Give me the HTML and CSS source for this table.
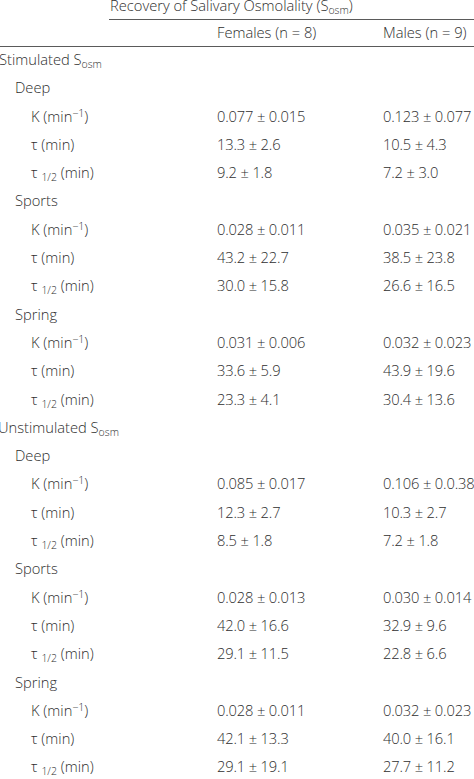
FILE: index.html
```html
<!DOCTYPE html>
<html>
<head>
<meta charset="utf-8">
<link rel="stylesheet" href="styles.css">
</head>
<body>
<div class="table">
  <div class="head-top"><span class="span-title">Recovery of Salivary Osmolality (S<sub>osm</sub>)</span></div>
  <div class="head-cols">
    <span></span><span>Females (n = 8)</span><span>Males (n = 9)</span>
  </div>
  <div class="body">
    <div class="row"><span class="l0">Stimulated S<sub>osm</sub></span><span></span><span></span></div>
    <div class="row"><span class="l1">Deep</span><span></span><span></span></div>
    <div class="row"><span class="l2">K (min<sup>−1</sup>)</span><span class="v">0.077 ± 0.015</span><span class="v">0.123 ± 0.077</span></div>
    <div class="row"><span class="l2">τ (min)</span><span class="v">13.3 ± 2.6</span><span class="v">10.5 ± 4.3</span></div>
    <div class="row"><span class="l2">τ <sub>1/2</sub> (min)</span><span class="v">9.2 ± 1.8</span><span class="v">7.2 ± 3.0</span></div>
    <div class="row"><span class="l1">Sports</span><span></span><span></span></div>
    <div class="row"><span class="l2">K (min<sup>−1</sup>)</span><span class="v">0.028 ± 0.011</span><span class="v">0.035 ± 0.021</span></div>
    <div class="row"><span class="l2">τ (min)</span><span class="v">43.2 ± 22.7</span><span class="v">38.5 ± 23.8</span></div>
    <div class="row"><span class="l2">τ <sub>1/2</sub> (min)</span><span class="v">30.0 ± 15.8</span><span class="v">26.6 ± 16.5</span></div>
    <div class="row"><span class="l1">Spring</span><span></span><span></span></div>
    <div class="row"><span class="l2">K (min<sup>−1</sup>)</span><span class="v">0.031 ± 0.006</span><span class="v">0.032 ± 0.023</span></div>
    <div class="row"><span class="l2">τ (min)</span><span class="v">33.6 ± 5.9</span><span class="v">43.9 ± 19.6</span></div>
    <div class="row"><span class="l2">τ <sub>1/2</sub> (min)</span><span class="v">23.3 ± 4.1</span><span class="v">30.4 ± 13.6</span></div>
    <div class="row"><span class="l0 un">Unstimulated S<sub>osm</sub></span><span></span><span></span></div>
    <div class="row"><span class="l1">Deep</span><span></span><span></span></div>
    <div class="row"><span class="l2">K (min<sup>−1</sup>)</span><span class="v">0.085 ± 0.017</span><span class="v">0.106 ± 0.0.38</span></div>
    <div class="row"><span class="l2">τ (min)</span><span class="v">12.3 ± 2.7</span><span class="v">10.3 ± 2.7</span></div>
    <div class="row"><span class="l2">τ <sub>1/2</sub> (min)</span><span class="v">8.5 ± 1.8</span><span class="v">7.2 ± 1.8</span></div>
    <div class="row"><span class="l1">Sports</span><span></span><span></span></div>
    <div class="row"><span class="l2">K (min<sup>−1</sup>)</span><span class="v">0.028 ± 0.013</span><span class="v">0.030 ± 0.014</span></div>
    <div class="row"><span class="l2">τ (min)</span><span class="v">42.0 ± 16.6</span><span class="v">32.9 ± 9.6</span></div>
    <div class="row"><span class="l2">τ <sub>1/2</sub> (min)</span><span class="v">29.1 ± 11.5</span><span class="v">22.8 ± 6.6</span></div>
    <div class="row"><span class="l1">Spring</span><span></span><span></span></div>
    <div class="row"><span class="l2">K (min<sup>−1</sup>)</span><span class="v">0.028 ± 0.011</span><span class="v">0.032 ± 0.023</span></div>
    <div class="row"><span class="l2">τ (min)</span><span class="v">42.1 ± 13.3</span><span class="v">40.0 ± 16.1</span></div>
    <div class="row"><span class="l2">τ <sub>1/2</sub> (min)</span><span class="v">29.1 ± 19.1</span><span class="v">27.7 ± 11.2</span></div>
  </div>
</div>
</body>
</html>
```
FILE: styles.css
```css
html, body {
  margin: 0;
  padding: 0;
  background: #ffffff;
  overflow: hidden;
}
body {
  font-family: "Open Sans", "DejaVu Sans", sans-serif;
  font-size: 14.7px;
  font-weight: 300;
  color: #2e2e2e;
  width: 474px;
  height: 779px;
}
.table {
  width: 474px;
}
.head-top {
  margin-left: 109px;
  line-height: 11px;
  height: 11px;
  padding-bottom: 8px;
  padding-left: 1px;
  border-bottom: 1px solid #5a5a5a;
  white-space: nowrap;
}
.head-cols {
  display: grid;
  grid-template-columns: 217px 166px 1fr;
  line-height: 11px;
  height: 11px;
  padding-top: 7px;
  padding-bottom: 8px;
  border-bottom: 1px solid #5a5a5a;
  white-space: nowrap;
}
.body {
  display: flex;
  flex-direction: column;
}
.row {
  display: grid;
  grid-template-columns: 217px 166px 1fr;
  height: 28.3px;
  line-height: 25px;
  white-space: nowrap;
}
.v { letter-spacing: -0.15px; }
.l0 { margin-left: -1px; }
.l0.un { margin-left: -2px; }
.l1 { padding-left: 15px; }
.l2 { padding-left: 31px; }
sub, sup {
  font-size: 10.5px;
  line-height: 0;
  position: relative;
  vertical-align: baseline;
}
sub { top: 3px; }
sup { top: -5px; }
```
